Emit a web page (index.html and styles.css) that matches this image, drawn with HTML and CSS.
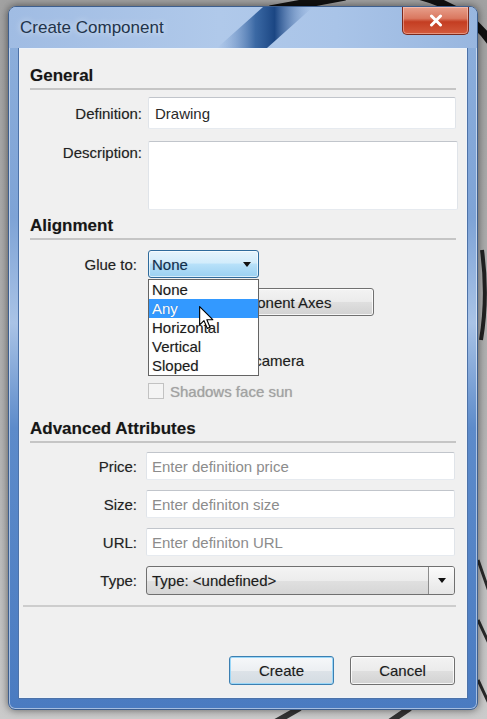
FILE: index.html
```html
<!DOCTYPE html>
<html lang="en">
<head>
    <meta charset="UTF-8">
    <title>Create Component</title>
    <link rel="stylesheet" href="styles.css">
</head>
<body>
    <div class="desktop">
        <!-- model edges behind the dialog -->
        <svg class="backdrop" width="487" height="719" viewBox="0 0 487 719">
            <path d="M270 10 L345 -4" stroke="#111" stroke-width="9" fill="none"/>
            <path d="M420 -4 C450 4, 475 18, 492 44" stroke="#111" stroke-width="8" fill="none"/>
            <path d="M482 250 C486 280, 486 310, 481 340" stroke="#222" stroke-width="4" fill="none"/>
            <path d="M478 560 L492 600 M478 620 L492 650 M478 680 L492 710" stroke="#2a2a2a" stroke-width="3" fill="none"/>
            <path d="M270 725 L300 708 M385 725 L410 708" stroke="#333" stroke-width="6" fill="none"/>
        </svg>

        <div class="dialog">
            <div class="titlebar">
                <!-- dark glass reflection across the caption -->
                <svg class="glass-streak" width="468" height="41" viewBox="0 0 468 41">
                    <defs>
                        <linearGradient id="streak" x1="0" y1="0" x2="1" y2="0">
                            <stop offset="0" stop-color="#7d9fd2" stop-opacity="0"/>
                            <stop offset="0.4" stop-color="#2e5e9c" stop-opacity="0.9"/>
                            <stop offset="0.6" stop-color="#1b4683"/>
                            <stop offset="1" stop-color="#7d9fd2" stop-opacity="0"/>
                        </linearGradient>
                    </defs>
                    <polygon points="254,0 304,0 258,41 208,41" fill="url(#streak)"/>
                </svg>
                <span class="title">Create Component</span>
                <button class="close-btn">
                    <svg width="16" height="13" viewBox="0 0 16 13">
                        <path d="M3.5 2 L12.5 11 M12.5 2 L3.5 11" stroke="#fff" stroke-width="3" stroke-linecap="round"/>
                    </svg>
                </button>
            </div>

            <div class="client">
                <!-- General -->
                <div class="section-head head-general">General</div>
                <div class="field-grid general-grid">
                    <label class="field-label">Definition:</label>
                    <input class="text-input def-input" type="text" value="Drawing">
                    <label class="field-label label-top">Description:</label>
                    <textarea class="text-input desc-input"></textarea>
                </div>

                <!-- Alignment -->
                <div class="section-head head-align">Alignment</div>
                <div class="field-grid align-grid">
                    <label class="field-label">Glue to:</label>
                    <div class="glue-wrap">
                        <div class="select glue-select">
                            <span>None</span>
                            <span class="arrow"></span>
                        </div>
                        <ul class="dropdown">
                            <li>None</li>
                            <li class="hover">Any</li>
                            <li>Horizontal</li>
                            <li>Vertical</li>
                            <li>Sloped</li>
                        </ul>
                    </div>

                    <span></span>
                    <button class="btn axes-btn">Set Component Axes</button>

                    <span></span>
                    <label class="check first-check"><span class="box"></span>Cut opening</label>
                    <span></span>
                    <label class="check"><span class="box"></span>Always face camera</label>
                    <span></span>
                    <label class="check disabled"><span class="box"></span>Shadows face sun</label>
                </div>

                <!-- Advanced Attributes -->
                <div class="section-head head-adv">Advanced Attributes</div>
                <div class="field-grid adv-grid">
                    <label class="field-label">Price:</label>
                    <input class="text-input small-input" type="text" placeholder="Enter definition price">
                    <label class="field-label">Size:</label>
                    <input class="text-input small-input" type="text" placeholder="Enter definiton size">
                    <label class="field-label">URL:</label>
                    <input class="text-input small-input" type="text" placeholder="Enter definiton URL">
                    <label class="field-label">Type:</label>
                    <div class="select type-select">
                        <span>Type: &lt;undefined&gt;</span>
                        <span class="drop-btn"><span class="arrow"></span></span>
                    </div>
                </div>

                <div class="footer-rule"></div>

                <div class="footer">
                    <button class="btn default-btn">Create</button>
                    <button class="btn">Cancel</button>
                </div>
            </div>
        </div>

        <!-- mouse pointer over the open list -->
        <svg class="cursor" width="15" height="24" viewBox="0 0 13 21">
            <path d="M0.5 0.5 L0.5 16.5 L4.3 12.8 L7.2 19.6 L9.6 18.6 L6.8 12 L12 12 Z" fill="#fff" stroke="#000" stroke-width="1" stroke-linejoin="round"/>
        </svg>
    </div>
</body>
</html>
```

FILE: styles.css
```css
* {
    margin: 0;
    padding: 0;
    box-sizing: border-box;
}

body {
    width: 487px;
    height: 719px;
    overflow: hidden;
    font-family: 'Liberation Sans', Arial, sans-serif;
    font-size: 15px;
    color: #1c1c1c;
    background: linear-gradient(180deg, #a2a2a2 0%, #b4b4b4 60%, #cbcbcb 100%);
}

.desktop {
    position: relative;
    width: 487px;
    height: 719px;
    padding: 6px 0 0 8px;
}

.backdrop {
    position: absolute;
    left: 0;
    top: 0;
}

/* window frame */
.dialog {
    position: relative;
    width: 470px;
    height: 704px;
    padding: 0 10px 11px;
    display: flex;
    flex-direction: column;
    border: 1px solid #3e5f8e;
    border-radius: 8px 8px 7px 7px;
    background: linear-gradient(180deg, #8eb0dc 0%, #7ea3d6 30%, #a9c3e6 45%, #5d8bca 60%, #4a7bc1 100%);
    box-shadow: 0 0 9px rgba(0, 0, 0, 0.55), inset 0 0 0 1px rgba(255, 255, 255, 0.5);
}

.titlebar {
    position: relative;
    height: 41px;
    margin: 0 -10px;
    padding: 0 8px 0 11px;
    display: flex;
    align-items: flex-start;
    border-radius: 7px 7px 0 0;
    background: linear-gradient(90deg, #a0bce3 0%, #b0c9ea 45%, #a9c4e8 70%, #98b6df 100%);
}

.glass-streak {
    position: absolute;
    left: 0;
    top: 0;
}

.title {
    position: relative;
    padding-top: 11px;
    font-size: 17px;
    line-height: 20px;
    color: #22344b;
    text-shadow: 0 0 6px rgba(255, 255, 255, 0.8);
}

.close-btn {
    position: relative;
    margin-left: auto;
    width: 67px;
    height: 28px;
    border: 1px solid #7b2a1d;
    border-top: none;
    border-radius: 0 0 5px 5px;
    background: linear-gradient(180deg, #e7a08c 0%, #da7860 42%, #c43d22 55%, #d35a3c 100%);
    box-shadow: inset 0 0 0 1px rgba(255, 220, 210, 0.45);
    display: flex;
    align-items: center;
    justify-content: center;
}

/* dialog body */
.client {
    height: 650px;
    padding: 17px 10px 12px;
    display: flex;
    flex-direction: column;
    background: #f0f0f0;
    border: 1px solid #eef3f9;
    box-shadow: 0 0 0 1px #4d72a8;
    text-shadow: 0 0 1px rgba(0, 0, 0, 0.25);
}

.section-head {
    font-weight: bold;
    font-size: 17px;
    line-height: 20px;
    padding-bottom: 2px;
    border-bottom: 2px solid #c5c5c5;
    color: #161616;
}

.head-align {
    margin-top: 6px;
}

.head-adv {
    margin-top: 18px;
}

.field-grid {
    display: grid;
    align-items: center;
}

.general-grid {
    grid-template-columns: 112px 308px;
    column-gap: 6px;
    row-gap: 12px;
    margin-top: 7px;
}

.align-grid {
    grid-template-columns: 107px 1fr;
    column-gap: 11px;
    margin-top: 10px;
}

.adv-grid {
    grid-template-columns: 107px 309px;
    column-gap: 9px;
    row-gap: 10px;
    margin-top: 9px;
}

.field-label {
    text-align: right;
    color: #222;
}

.label-top {
    align-self: start;
    padding-top: 3px;
}

.text-input {
    display: block;
    width: 100%;
    font-family: inherit;
    font-size: 15px;
    color: #2a2a2a;
    padding: 0 6px;
    background: #fff;
    border: 1px solid;
    border-color: #c1c5cb #e0e4e9 #e6eaef #e0e4e9;
    border-radius: 2px;
    outline: none;
}

.text-input::placeholder {
    color: #8c8c8c;
}

.def-input {
    height: 32px;
}

.desc-input {
    height: 69px;
    width: 310px;
    resize: none;
}

.small-input {
    height: 28px;
    padding: 0 5px;
}

/* combo boxes */
.select {
    display: flex;
    align-items: center;
    height: 28px;
    border-radius: 3px;
    color: #1c1c1c;
}

.arrow {
    width: 0;
    height: 0;
    border-left: 4px solid transparent;
    border-right: 4px solid transparent;
    border-top: 5px solid #111;
}

.glue-wrap {
    position: relative;
    width: 111px;
}

.glue-select {
    padding: 0 7px 0 3px;
    justify-content: space-between;
    border: 1px solid #2f6b9c;
    background: linear-gradient(180deg, #e6f4fc 0%, #d2ecfb 45%, #b6e0f9 52%, #9ad0f1 100%);
    box-shadow: inset 0 0 0 1px rgba(255, 255, 255, 0.6);
    color: #12304f;
}

.dropdown {
    position: absolute;
    left: 0;
    top: 29px;
    width: 111px;
    z-index: 5;
    list-style: none;
    background: #fff;
    border: 1px solid #646464;
}

.dropdown li {
    height: 19px;
    line-height: 19px;
    padding-left: 3px;
    color: #1c1c1c;
}

.dropdown li.hover {
    background: #3399ff;
    color: #fff;
}

.type-select {
    height: 29px;
    padding-left: 5px;
    border: 1px solid #707070;
    background: linear-gradient(180deg, #f4f4f4 0%, #ececec 50%, #e0e0e0 51%, #d6d6d6 100%);
    overflow: hidden;
}

.drop-btn {
    margin-left: auto;
    width: 26px;
    align-self: stretch;
    display: flex;
    align-items: center;
    justify-content: center;
    border-left: 1px solid #8c8c8c;
    background: linear-gradient(180deg, #fbfbfb, #e6e6e6);
}

/* buttons */
.btn {
    height: 29px;
    font-family: inherit;
    font-size: 15px;
    color: #1c1c1c;
    border: 1px solid #707070;
    border-radius: 3px;
    background: linear-gradient(180deg, #f3f3f3 0%, #ebebeb 50%, #dfdfdf 51%, #d2d2d2 100%);
    box-shadow: inset 0 0 0 1px rgba(255, 255, 255, 0.8);
    text-shadow: 0 0 1px rgba(0, 0, 0, 0.25);
}

.axes-btn {
    width: 226px;
    height: 28px;
    margin-top: 10px;
}

.default-btn {
    border-color: #3c7fb1;
    box-shadow: inset 0 0 0 1px #9ad7f8;
    background: linear-gradient(180deg, #f6f8fa 0%, #eceff2 50%, #dde3e8 51%, #d3dbe2 100%);
}

.check {
    display: flex;
    align-items: center;
    height: 20px;
    margin-top: 11px;
    color: #1c1c1c;
}

.first-check {
    margin-top: 3px;
}

.box {
    width: 16px;
    height: 16px;
    margin-right: 6px;
    border: 1px solid #8e8f8f;
    background: linear-gradient(135deg, #e0e0e0, #fdfdfd);
}

.check.disabled {
    color: #a2a2a2;
}

.check.disabled .box {
    border-color: #c2c2c2;
    background: #f4f4f4;
}

.footer-rule {
    margin-top: 10px;
    margin-left: -7px;
    border-bottom: 2px solid #cdcdcd;
}

.footer {
    margin-top: auto;
    display: flex;
    justify-content: flex-end;
    gap: 16px;
    padding-right: 1px;
}

.footer .btn {
    width: 105px;
}

.cursor {
    position: absolute;
    left: 199px;
    top: 306px;
    z-index: 10;
}
```
